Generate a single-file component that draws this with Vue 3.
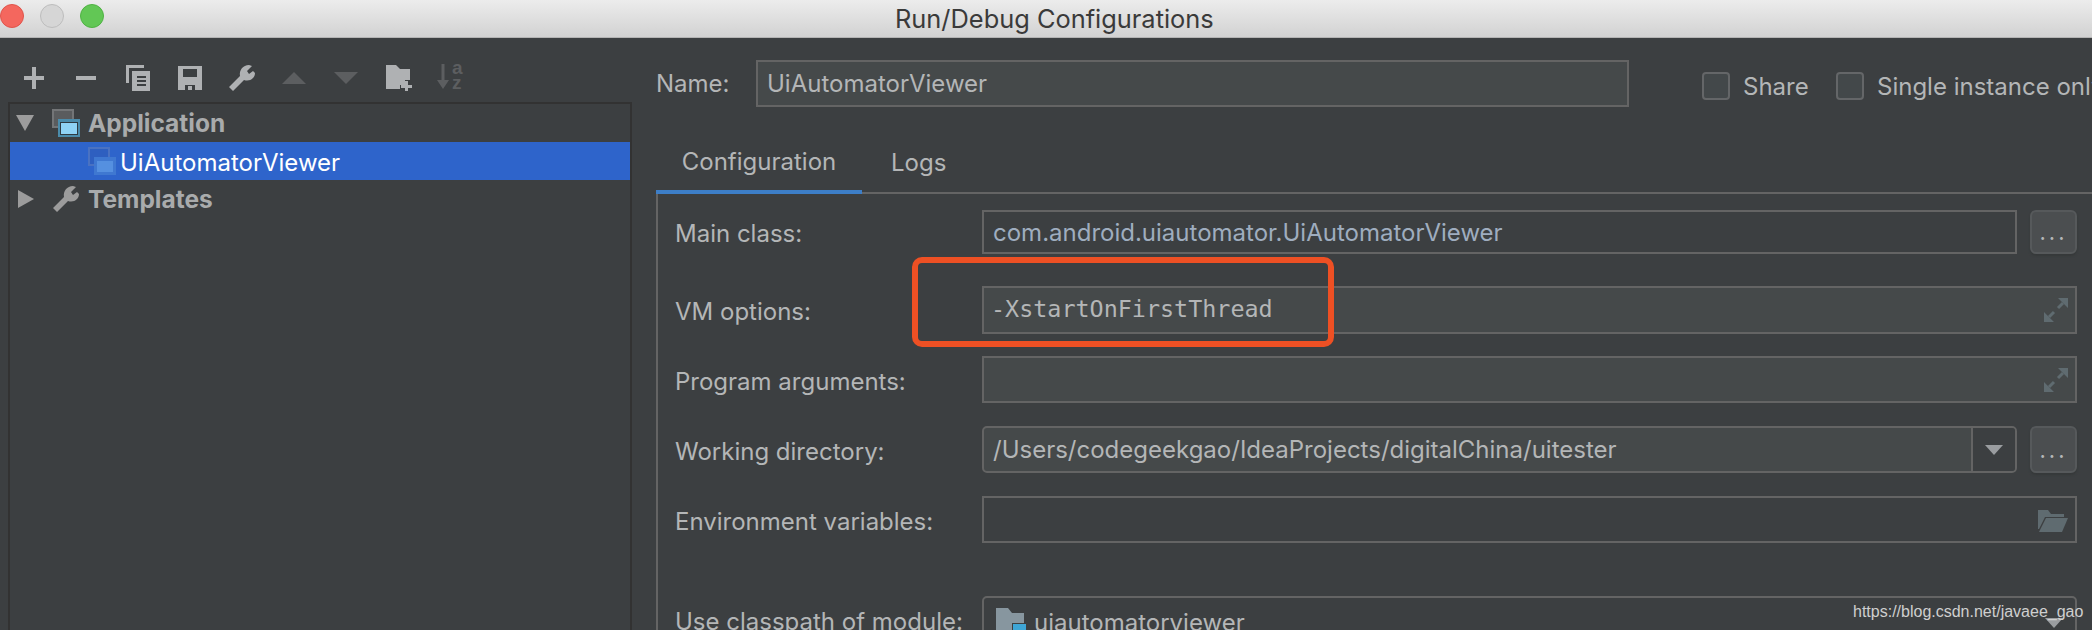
<script setup>
</script>

<template>
  <div class="window">
    <header class="titlebar">
      <div class="lights">
        <span class="light red"></span>
        <span class="light grey"></span>
        <span class="light green"></span>
      </div>
      <div class="title">Run/Debug Configurations</div>
    </header>

    <div class="content">
      <aside class="side">
        <div class="toolbar">
          <svg class="tb" width="20" height="22" viewBox="0 0 20 22"><path d="M8 0h4v9h8v4h-8v9H8v-9H0V9h8z" fill="#afb1b3"/></svg>
          <svg class="tb" width="20" height="4" viewBox="0 0 20 4" style="margin-left:32px"><rect width="20" height="4" fill="#afb1b3"/></svg>
          <svg class="tb" width="24" height="26" viewBox="0 0 24 26" style="margin-left:30px">
            <path d="M0 0h18v3H3v15H0z" fill="#afb1b3"/>
            <path d="M6 6h18v20H6z" fill="#afb1b3"/>
            <path d="M11 11h9v2h-9zM11 15h9v2h-9zM11 19h9v2h-9z" fill="#3c3f41"/>
          </svg>
          <svg class="tb" width="24" height="24" viewBox="0 0 24 24" style="margin-left:28px">
            <path d="M0 0h24v24H0z" fill="#afb1b3"/>
            <path d="M5 3h14v8H5zM7 19h10v5H7z" fill="#3c3f41"/>
            <path d="M10 20h4v4h-4z" fill="#afb1b3"/>
          </svg>
          <svg class="tb" width="28" height="28" viewBox="0 0 28 28" style="margin-left:26px">
            <path d="M1 23 12 12C11 6 15 1 21 1l3 1-5 5 2 3 4-3 2 2c0 5-5 9-11 7L5 27z" fill="#afb1b3"/>
          </svg>
          <svg class="tb" width="24" height="12" viewBox="0 0 24 12" style="margin-left:26px"><path d="M12 0 24 12H0z" fill="#5c5e60"/></svg>
          <svg class="tb" width="24" height="12" viewBox="0 0 24 12" style="margin-left:28px"><path d="M0 0h24L12 12z" fill="#5c5e60"/></svg>
          <svg class="tb" width="28" height="26" viewBox="0 0 28 26" style="margin-left:28px">
            <path d="M0 0h10l4 4h10v20H0z" fill="#afb1b3"/>
            <path d="M14 20h5v-5h5v5h4v5h-4v1h-5v-1h-5z" fill="#3c3f41"/>
            <path d="M19 16h3v4h4v3h-4v3h-3v-3h-4v-3h4z" fill="#afb1b3"/>
          </svg>
          <svg class="tb" width="28" height="44" viewBox="0 -8 28 44" style="margin-left:23px">
            <path d="M4.500 0h3v16H12l-6 9-6-9h4.500z" fill="#5c5e60"/>
            <text x="15" y="10" class="az">a</text>
            <text x="15" y="25" class="az">z</text>
          </svg>
        </div>

        <div class="tree">
          <div class="node">
            <svg class="arrow" width="18" height="16" viewBox="0 0 18 16"><path d="M0 0h18L9 16z" fill="#9c9c9c"/></svg>
            <svg class="appicon" width="28" height="28" viewBox="0 0 28 28">
              <rect x="1" y="1" width="20" height="17" fill="#5a5c5e" stroke="#737577" stroke-width="2"/>
              <rect x="6" y="10" width="22" height="18" fill="#4b8cab"/>
              <rect x="8" y="13" width="18" height="13" fill="#2f3b42"/>
              <rect x="9" y="14" width="16" height="11" fill="#8fd3f5"/>
            </svg>
            <span class="nodelabel">Application</span>
          </div>
          <div class="node selected">
            <svg class="appicon" width="28" height="28" viewBox="0 0 28 28">
              <rect x="1" y="1" width="20" height="17" fill="#2e5fc0" stroke="#4a72c2" stroke-width="2"/>
              <rect x="6" y="10" width="22" height="18" fill="#3f78d1"/>
              <rect x="9" y="14" width="16" height="11" fill="#5590e0"/>
            </svg>
            <span class="nodelabel sel">UiAutomatorViewer</span>
          </div>
          <div class="node">
            <svg class="arrow right" width="16" height="18" viewBox="0 0 16 18"><path d="M0 0l16 9-16 9z" fill="#9c9c9c"/></svg>
            <svg class="wrench" width="28" height="28" viewBox="0 0 28 28">
              <path d="M1 23 12 12C11 6 15 1 21 1l3 1-5 5 2 3 4-3 2 2c0 5-5 9-11 7L5 27z" fill="#9c9c9c"/>
            </svg>
            <span class="nodelabel">Templates</span>
          </div>
        </div>
      </aside>

      <main class="main">
        <div class="namerow">
          <label class="namelabel">Name:</label>
          <div class="field light-f namefield">UiAutomatorViewer</div>
          <span class="check first"></span><span class="checktext share">Share</span>
          <span class="check"></span><span class="checktext">Single instance only</span>
        </div>

        <div class="tabs">
          <div class="tab active">Configuration</div>
          <div class="tab logs">Logs</div>
        </div>

        <div class="form">
          <div class="row r-main">
            <label class="rowlabel">Main class:</label>
            <div class="field class-f">com.android.uiautomator.UiAutomatorViewer</div>
            <button class="dots">...</button>
          </div>
          <div class="row r-vm">
            <label class="rowlabel">VM options:</label>
            <div class="field light-f mono">-XstartOnFirstThread
              <svg class="expand" width="24" height="24" viewBox="0 0 24 24"><path d="M14 0h10v10zM0 14l10 10H0z" fill="#5f6b70"/><path d="M19 5l-5 5M5 19l5-5" stroke="#5f6b70" stroke-width="3" fill="none"/></svg>
            </div>
          </div>
          <div class="row r-std">
            <label class="rowlabel">Program arguments:</label>
            <div class="field light-f">
              <svg class="expand" width="24" height="24" viewBox="0 0 24 24"><path d="M14 0h10v10zM0 14l10 10H0z" fill="#5f6b70"/><path d="M19 5l-5 5M5 19l5-5" stroke="#5f6b70" stroke-width="3" fill="none"/></svg>
            </div>
          </div>
          <div class="row r-std">
            <label class="rowlabel">Working directory:</label>
            <div class="combo">
              <span class="combotext">/Users/codegeekgao/IdeaProjects/digitalChina/uitester</span>
              <span class="combobtn"><svg width="18" height="10" viewBox="0 0 18 10"><path d="M0 0h18L9 10z" fill="#9a9da0"/></svg></span>
            </div>
            <button class="dots">...</button>
          </div>
          <div class="row r-std">
            <label class="rowlabel">Environment variables:</label>
            <div class="field dark-f">
              <svg class="folder" width="30" height="22" viewBox="0 0 30 22"><path d="M0 0h10l3 4h13v3H7L1 19H0z" fill="#5f6b70"/><path d="M8 8h22l-6 14H1z" fill="#5f6b70"/></svg>
            </div>
          </div>
          <div class="row r-module">
            <label class="rowlabel">Use classpath of module:</label>
            <div class="modulebox">
              <svg class="modicon" width="30" height="26" viewBox="0 0 30 26"><path d="M0 0h12l4 5h12v21H0z" fill="#87969f"/><path d="M16 15h14v11H16z" fill="#3c3f41"/><path d="M17 16h13v10H17z" fill="#3ea6d6"/></svg>
              <span>uiautomatorviewer</span>
              <svg class="modarrow" width="18" height="10" viewBox="0 0 18 10"><path d="M0 0h18L9 10z" fill="#9a9da0"/></svg>
            </div>
          </div>
        </div>
      </main>
    </div>

    <div class="annotation"></div>
    <div class="watermark">https://blog.csdn.net/javaee_gao</div>
  </div>
</template>

<style>
html, body { margin: 0; overflow: hidden; background: #3c3f41; }
</style>

<style scoped>
.window {
  position: relative;
  width: 2092px;
  height: 630px;
  overflow: hidden;
  background: #3c3f41;
  font-family: Inter, "Liberation Sans", sans-serif;
  color: #b4b6b7;
  font-size: 24px;
}
.titlebar {
  height: 37px;
  border-bottom: 1px solid #b4b4b4;
  background: linear-gradient(#ececec, #d2d2d2);
  display: flex;
  align-items: center;
}
.lights { display: flex; gap: 16px; margin-top: -5px; }
.light { width: 24px; height: 24px; border-radius: 50%; box-sizing: border-box; }
.red { background: #f4675e; border: 1px solid #e0544b; }
.grey { background: #d6d6d6; border: 1px solid #bdbdbd; }
.green { background: #62c755; border: 1px solid #4fb243; }
.title {
  margin-left: 791px;
  font-size: 25.400px;
  color: #3a3a3a;
  white-space: nowrap;
}
.content { display: flex; height: 592px; }
.side { width: 632px; flex: none; display: flex; flex-direction: column; }
.toolbar { height: 64px; display: flex; align-items: center; padding-left: 24px; box-sizing: border-box; padding-top: 16px; }
.tb { flex: none; }
.az { font: bold 19px "Liberation Sans", sans-serif; fill: #5c5e60; }
.tree {
  margin-left: 8px;
  flex: 1;
  border-top: 2px solid #323232;
  border-left: 2px solid #323232;
  border-right: 2px solid #323232;
}
.node { height: 38px; display: flex; align-items: center; position: relative; padding-left: 6px; }
.arrow { flex: none; margin-right: 18px; }
.arrow.right { margin-left: 2px; margin-right: 18px; }
.appicon, .wrench { flex: none; margin-right: 8px; }
.selected { background: #2e64cb; padding-left: 78px; }
.selected .appicon { margin-right: 4px; }
.nodelabel { font-weight: 700; font-size: 24.500px; color: #a9abac; }
.nodelabel.sel { font-weight: 400; font-size: 24px; color: #fff; padding-top: 2px; }
.main { flex: 1; padding-left: 24px; min-width: 0; }
.namerow { display: flex; align-items: center; height: 47px; margin-top: 22px; }
.namelabel { width: 100px; flex: none; }
.field {
  box-sizing: border-box;
  border: 2px solid #646464;
  padding: 0 9px;
  display: flex;
  align-items: center;
  position: relative;
  white-space: pre;
}
.light-f { background: #45494a; }
.dark-f { background: #3c3f41; }
.class-f { background: #3c3f41; color: #9fadbf; }
.namefield { width: 873px; height: 47px; flex: none; }
.check {
  width: 28px; height: 28px; box-sizing: border-box; flex: none;
  border: 2px solid #646668; border-radius: 4px; background: #43484a;
  margin-top: 5px;
}
.check.first { margin-left: 73px; }
.checktext { margin-left: 13px; white-space: nowrap; margin-top: 5px; }
.checktext.share { width: 93px; flex: none; }
.tabs { display: flex; height: 87px; border-bottom: 2px solid #646464; box-sizing: border-box; margin-right: -100px; }
.tab { display: flex; align-items: center; height: 85px; box-sizing: border-box; padding-top: 26px; }
.tab.active { width: 206px; justify-content: center; border-bottom: 4px solid #3d7ec7; height: 87px; padding-top: 26px; }
.tab.logs { margin-left: 29px; }
.form { border-left: 2px solid #646464; padding-left: 17px; padding-top: 16px; height: 436px; }
.row { display: flex; align-items: stretch; }
.rowlabel { width: 307px; flex: none; display: flex; align-items: center; white-space: nowrap; padding-top: 3px; box-sizing: border-box; }
.r-main { height: 44px; }
.r-vm { height: 48px; margin-top: 32px; }
.r-std { height: 47px; margin-top: 22px; }
.r-module { height: 47px; margin-top: 53px; }
.r-std + .r-std { margin-top: 23px; }
.r-main .field { width: 1035px; }
.r-vm .field, .r-std .field { width: 1095px; }
.mono { font-family: "DejaVu Sans Mono", monospace; font-size: 23.400px; padding-left: 7px; padding-bottom: 2px; }
.expand { position: absolute; right: 7px; top: 10px; }
.folder { position: absolute; right: 7px; top: 12px; }
.dots {
  width: 47px; margin-left: 13px; flex: none; box-sizing: border-box;
  background: #4b4e50; border: 2px solid #56595b; border-radius: 6px;
  box-shadow: 0 2px 2px #36393a; color: #b4b6b7; font: 22px Inter, sans-serif;
  padding: 0; line-height: 1; letter-spacing: 3px;
}
.combo {
  width: 1035px; box-sizing: border-box; display: flex; align-items: stretch;
  border: 2px solid #646464; border-radius: 5px; overflow: hidden; background: #45494a;
}
.combotext { flex: 1; display: flex; align-items: center; padding-left: 9px; white-space: nowrap; }
.combobtn {
  width: 42px; flex: none; background: #3c3f41; border-left: 2px solid #646464;
  display: flex; align-items: center; justify-content: center;
}
.modulebox {
  width: 1095px; height: 60px; flex: none; box-sizing: border-box; position: relative; display: flex; align-items: flex-start;
  border: 2px solid #646464; border-radius: 5px; padding: 10px 0 0 12px; gap: 8px;
}
.modicon { flex: none; }
.modarrow { position: absolute; right: 12px; top: 20px; }
.annotation {
  position: absolute; left: 912px; top: 257px; width: 422px; height: 90px;
  box-sizing: border-box; border: 6px solid #ee5024; border-radius: 10px; pointer-events: none;
}
.watermark {
  position: absolute; left: 1853px; top: 602px;
  font: 16px/20px "Liberation Sans", sans-serif; color: #cfcfcf; white-space: nowrap;
}
</style>
